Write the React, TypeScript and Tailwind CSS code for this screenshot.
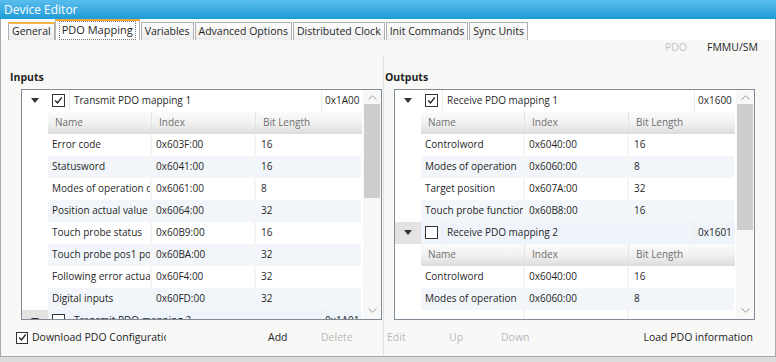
import React from "react";

type Row = [string, string, string];
type Group = { title: string; hex: string; checked: boolean; active?: boolean; rows: Row[] };

const inputs: Group[] = [
  {
    title: "Transmit PDO mapping 1",
    hex: "0x1A00",
    checked: true,
    rows: [
      ["Error code", "0x603F:00", "16"],
      ["Statusword", "0x6041:00", "16"],
      ["Modes of operation display", "0x6061:00", "8"],
      ["Position actual value", "0x6064:00", "32"],
      ["Touch probe status", "0x60B9:00", "16"],
      ["Touch probe pos1 pos value", "0x60BA:00", "32"],
      ["Following error actual value", "0x60F4:00", "32"],
      ["Digital inputs", "0x60FD:00", "32"],
    ],
  },
  { title: "Transmit PDO mapping 2", hex: "0x1A01", checked: false, active: true, rows: [] },
];

const outputs: Group[] = [
  {
    title: "Receive PDO mapping 1",
    hex: "0x1600",
    checked: true,
    rows: [
      ["Controlword", "0x6040:00", "16"],
      ["Modes of operation", "0x6060:00", "8"],
      ["Target position", "0x607A:00", "32"],
      ["Touch probe function", "0x60B8:00", "16"],
    ],
  },
  {
    title: "Receive PDO mapping 2",
    hex: "0x1601",
    checked: false,
    active: true,
    rows: [
      ["Controlword", "0x6040:00", "16"],
      ["Modes of operation", "0x6060:00", "8"],
      ["", "", ""],
    ],
  },
];

const tabs = ["General", "PDO Mapping", "Variables", "Advanced Options", "Distributed Clock", "Init Commands", "Sync Units"];

function Check({ on, small }: { on: boolean; small?: boolean }) {
  return (
    <div className={`flex shrink-0 items-center justify-center border border-[#333] bg-white ${small ? "h-[12px] w-[12px]" : "h-[13px] w-[13px]"}`}>
      {on && (
        <svg width="9" height="9" viewBox="0 0 9 9">
          <path d="M1.2 4.6 L3.5 7 L7.8 1.4" fill="none" stroke="#222" strokeWidth="1.4" />
        </svg>
      )}
    </div>
  );
}

function Arrow() {
  return (
    <svg width="8" height="5" viewBox="0 0 8 5">
      <path d="M0 0 H8 L4 5 Z" fill="#333" />
    </svg>
  );
}

function Chevron({ up }: { up?: boolean }) {
  return (
    <svg width="9" height="5" viewBox="0 0 9 5">
      <path d={up ? "M0.5 4.5 L4.5 0.8 L8.5 4.5" : "M0.5 0.5 L4.5 4.2 L8.5 0.5"} fill="none" stroke="#9a9a9a" strokeWidth="1" />
    </svg>
  );
}

function PdoTable({ groups, thumbH }: { groups: Group[]; thumbH: number }) {
  return (
    <div className="flex h-[231px] w-[361px] overflow-hidden border border-[#7f8c98] bg-white text-[10px]">
      <div className="flex w-[341px] flex-col">
        {groups.map((g) => (
          <div key={g.title} className="flex flex-col">
            <div className={`flex h-[22px] shrink-0 items-center ${g.active ? "bg-[#eef4fa]" : "bg-white"}`}>
              <div className={`flex h-full w-[26px] items-center justify-center ${g.active ? "bg-[#e3e3e3]" : ""}`}>
                <Arrow />
              </div>
              <div className="flex h-full w-[22px] items-center justify-center border-r border-[#ececec]">
                <Check on={g.checked} />
              </div>
              <div className="flex h-full w-[252px] items-center border-r border-[#ececec] pl-[4px]">{g.title}</div>
              <div className="flex h-full flex-1 items-center pl-[3px]">{g.hex}</div>
            </div>
            {g.rows.length > 0 && (
              <div className="ml-[26px] flex h-[22px] shrink-0 bg-gradient-to-b from-[#fbfbfb] via-[#f1f1f1] to-[#dcdcdc] text-[#6f6f6f]">
                <div className="flex w-[104px] items-center border-r border-[#e2e2e2] pl-[7px]">Name</div>
                <div className="flex w-[104px] items-center border-r border-[#e2e2e2] pl-[7px]">Index</div>
                <div className="flex w-[105px] items-center pl-[7px]">Bit Length</div>
              </div>
            )}
            {g.rows.map((r, i) => (
              <div key={r[0] + i} className={`ml-[26px] flex h-[22px] w-[313px] shrink-0 ${i % 2 ? "bg-[#f2f6fa]" : "bg-white"}`}>
                <div className="flex w-[104px] items-center overflow-hidden whitespace-nowrap border-r-2 border-[#f5f5f5] pl-[4px]">{r[0]}</div>
                <div className="flex w-[104px] items-center border-r-2 border-[#f5f5f5] pl-[4px]">{r[1]}</div>
                <div className="flex w-[105px] items-center pl-[5px]">{r[2]}</div>
              </div>
            ))}
          </div>
        ))}
      </div>
      <div className="ml-[1px] flex w-[18px] flex-col bg-[#f7f7f7]">
        <div className="flex h-[14px] shrink-0 items-center justify-center pt-[2px]">
          <Chevron up />
        </div>
        <div className="w-[16px] self-center bg-[#cdcdcd]" style={{ height: thumbH }} />
        <div className="flex-1" />
        <div className="flex h-[16px] shrink-0 items-center justify-center">
          <Chevron />
        </div>
      </div>
    </div>
  );
}

export default function App() {
  return (
    <div className="flex h-[362px] w-[776px] flex-col bg-[#dcdcdc] text-[10.5px] text-[#1f1f1f] [font-family:'Open_Sans','Noto_Sans',sans-serif]">
      <div className="flex h-[19px] shrink-0 items-center bg-gradient-to-b from-[#58bdec] to-[#1b9bd8] pl-[4px] text-[12px] text-white">
        Device Editor
      </div>
      <div className="flex h-[338px] shrink-0 flex-col border-x border-b border-[#a9a9a9] bg-[#f8f8f7]">
        <div className="flex h-[21px] shrink-0 items-end bg-white pl-[6px]">
          {tabs.map((t) => {
            const sel = t === "PDO Mapping";
            const hov = t === "General";
            return (
              <div
                key={t}
                className={`flex items-center border border-b-0 ${
                  sel
                    ? "h-[21px] border-[#b6b6b6] border-t-2 border-t-[#f2a640] bg-white px-[3px]"
                    : `ml-[1px] h-[18px] border-[#b0b0b0] bg-gradient-to-b from-[#fdfdfd] to-[#ededed] px-[3px] ${hov ? "border-t-2 border-t-[#f2b44a]" : ""}`
                }`}
              >
                <span className={sel ? "border border-dotted border-[#777] px-[2px] text-[11px]" : ""}>{t}</span>
              </div>
            );
          })}
        </div>
        <div className="flex h-[16px] shrink-0 items-center justify-end gap-[20px] pr-[17px]">
          <span className="text-[#c2c2c2]">PDO</span>
          <span>FMMU/SM</span>
        </div>
        <div className="flex flex-1">
          <div className="flex w-[383px] flex-col border-r border-[#e2e2e2] pt-[14px]">
            <div className="pl-[9px] font-bold">Inputs</div>
            <div className="mt-[3px] pl-[20px]">
              <PdoTable groups={inputs} thumbH={94} />
            </div>
            <div className="flex flex-1 items-center">
              <div className="flex w-[165px] items-center gap-[4px] overflow-hidden whitespace-nowrap pl-[15px]">
                <Check on small />
                Download PDO Configuration
              </div>
              <span className="ml-[102px] w-[53px]">Add</span>
              <span className="text-[#b8b8b8]">Delete</span>
            </div>
          </div>
          <div className="flex flex-1 flex-col pt-[14px]">
            <div className="pl-[1px] font-bold">Outputs</div>
            <div className="mt-[3px] pl-[10px]">
              <PdoTable groups={outputs} thumbH={126} />
            </div>
            <div className="flex flex-1 items-center">
              <span className="ml-[3px] w-[62px] text-[#b8b8b8]">Edit</span>
              <span className="w-[52px] text-[#b8b8b8]">Up</span>
              <span className="text-[#b8b8b8]">Down</span>
              <span className="ml-auto mr-[22px]">Load PDO information</span>
            </div>
          </div>
        </div>
      </div>
    </div>
  );
}
